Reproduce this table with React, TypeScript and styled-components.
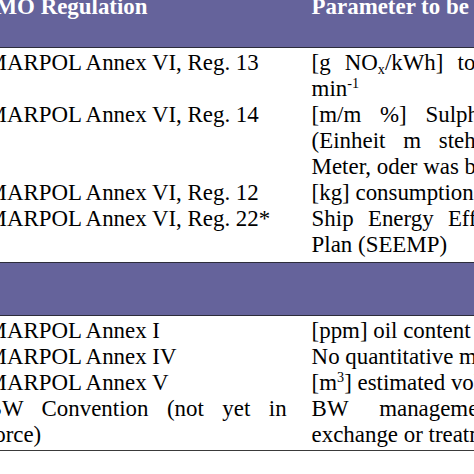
import styled, { createGlobalStyle } from "styled-components";

const GlobalStyle = createGlobalStyle`
  html, body {
    margin: 0;
    padding: 0;
    background: #ffffff;
    overflow: hidden;
  }
`;

const Page = styled.div`
  width: 474px;
  height: 474px;
  overflow: hidden;
  background: #ffffff;
`;

// the table is wider than the window; only its middle part shows
const Table = styled.div`
  width: 715px;
  margin: -5.6px 0 0 -25.9px;
  font-family: "Liberation Serif", "Times New Roman", serif;
  font-size: 22.9px;
  line-height: 26px;
  color: #000000;
`;

const Row = styled.div`
  display: grid;
  grid-template-columns: 325px 390px;
`;

const HeaderRow = styled(Row)`
  height: 53px;
  background: #65639b;
  color: #ffffff;
  font-weight: bold;
  border-bottom: 1px solid #2c2c3a;
`;

const Cell = styled.div`
  padding: 0 12.5px;
  text-align: justify;
  hyphens: none;
`;

const Section = styled.div<{ $top: number; $bottom: number }>`
  padding-top: ${(p) => p.$top}px;
  padding-bottom: ${(p) => p.$bottom}px;
`;

const Band = styled.div`
  height: 52.4px;
  background: #65639b;
  border-top: 1px solid #2c2c3a;
  border-bottom: 1px solid #2c2c3a;
`;

const Bottom = styled.div`
  border-top: 1px solid #3a3a3a;
`;

const Sub = styled.sub`
  font-size: 0.62em;
  line-height: 0;
  vertical-align: -0.28em;
`;

const Sup = styled.sup`
  font-size: 0.62em;
  line-height: 0;
  vertical-align: 0.55em;
`;

type Entry = { regulation: string; parameter: React.ReactNode };

const air: Entry[] = [
  {
    regulation: "MARPOL Annex VI, Reg. 13",
    parameter: (
      <>
        [g NO<Sub>x</Sub>/kWh] tolerance by speed in min<Sup>-1</Sup>
      </>
    ),
  },
  {
    regulation: "MARPOL Annex VI, Reg. 14",
    parameter:
      "[m/m %] Sulphur content of fuel (Einheit m steht für Masse? Oder Meter, oder was bedeutet das?)",
  },
  {
    regulation: "MARPOL Annex VI, Reg. 12",
    parameter: "[kg] consumption of refrigerants",
  },
  {
    regulation: "MARPOL Annex VI, Reg. 22*",
    parameter: "Ship Energy Efficiency Management Plan (SEEMP)",
  },
];

const sea: Entry[] = [
  { regulation: "MARPOL Annex I", parameter: "[ppm] oil content of bilge water" },
  { regulation: "MARPOL Annex IV", parameter: "No quantitative monitoring required" },
  {
    regulation: "MARPOL Annex V",
    parameter: (
      <>
        [m<Sup>3</Sup>] estimated volume of garbage
      </>
    ),
  },
  {
    regulation: "BW Convention (not yet in force)",
    parameter: "BW management (ballast water exchange or treatment)",
  },
];

const Rows = ({ entries }: { entries: Entry[] }) => (
  <>
    {entries.map((e) => (
      <Row key={e.regulation}>
        <Cell>{e.regulation}</Cell>
        <Cell>{e.parameter}</Cell>
      </Row>
    ))}
  </>
);

export default function App() {
  return (
    <Page>
      <GlobalStyle />
      <Table>
        <HeaderRow>
          <Cell>IMO Regulation</Cell>
          <Cell>Parameter to be monitored</Cell>
        </HeaderRow>
        <Section $top={1.6} $bottom={3.6}>
          <Rows entries={air} />
        </Section>
        <Band />
        <Section $top={1.7} $bottom={2.3}>
          <Rows entries={sea} />
        </Section>
        <Bottom />
      </Table>
    </Page>
  );
}
